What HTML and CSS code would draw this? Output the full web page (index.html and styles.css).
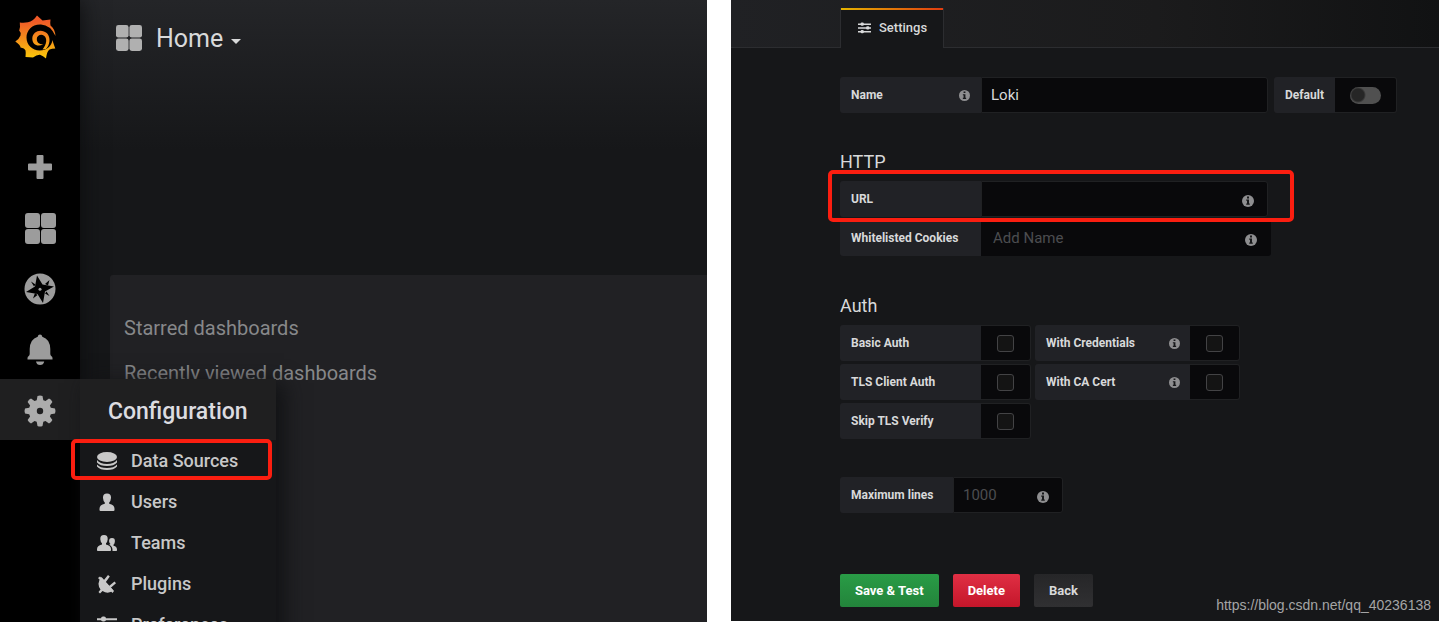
FILE: index.html
```html
<!DOCTYPE html>
<html lang="en">
<head>
    <meta charset="UTF-8">
    <meta name="viewport" content="width=device-width, initial-scale=1.0">
    <title>Grafana - Loki data source</title>
    <link rel="stylesheet" href="styles.css">
</head>
<body>
    <svg class="sprite" aria-hidden="true">
        <symbol id="icon-apps" viewBox="0 0 32 32">
            <rect x="0" y="0" width="15.500" height="15.500" rx="3"/>
            <rect x="16.500" y="0" width="15.500" height="15.500" rx="3"/>
            <rect x="0" y="16.500" width="15.500" height="15.500" rx="3"/>
            <rect x="16.500" y="16.500" width="15.500" height="15.500" rx="3"/>
        </symbol>
        <symbol id="icon-info" viewBox="0 0 12 12">
            <circle cx="6" cy="6" r="6"/>
            <path class="cut" d="M5 1.6h2v1.8H5zM4.2 4.5H7v4h.8v1.3H4.2V8.5H5V5.8h-.8z"/>
        </symbol>
        <symbol id="icon-sliders" viewBox="0 0 20 18">
            <path d="M0 2.2h20v2H0zM0 8h20v2H0zM0 13.8h20v2H0z"/>
            <rect x="4" y="0.6" width="5" height="5" rx="2"/>
            <rect x="12.5" y="6.4" width="5" height="5" rx="2"/>
            <rect x="4" y="12.2" width="5" height="5" rx="2"/>
        </symbol>
    </svg>

    <section class="pane home">
        <nav class="sidemenu">
            <a class="logo" href="#" aria-label="Grafana">
                <svg width="42" height="44" viewBox="0 0 42 44">
                    <defs>
                        <linearGradient id="logo-fill" gradientUnits="userSpaceOnUse" x1="0" y1="6" x2="0" y2="44">
                            <stop offset="0" stop-color="#f05a28"/>
                            <stop offset="1" stop-color="#fbca0a"/>
                        </linearGradient>
                    </defs>
                    <path fill="url(#logo-fill)" d="M22 0.500L27.500 5.500Q31.500 5 35.500 4.500Q35 8 35.500 10.500Q40 14 40.500 21Q35.500 10 26 9.500C17 9 11.500 15.500 11.500 22.500C11.500 30 17.500 35.500 24.500 35.500C32 35.500 36.500 31 37.500 25L38 27Q39 30 40.300 33.500Q37 33.500 34.500 34.500Q32 36 31 43.500Q28 41 25 39.800Q22 39.500 18 42.500Q15 42 10.500 42Q11 38 10.500 35.500Q9.500 33 5.500 32.500Q5.500 30 0.300 26.500Q4.500 23.500 5.500 20.500Q6 17 4.200 15.500Q5.500 12 4.800 7.500Q9 8 13 7.300Q18 6.500 22 0.500Z"/>
                    <path fill="url(#logo-fill)" d="M31 34C35 30 36 22.500 32 18.300C27 13.300 17.500 15.500 17.300 23.500C17.300 29.500 22.500 32.300 28.300 29.300C24.500 29.500 21.800 27.500 21.800 24C21.800 20.500 26 18.700 29 20.700C32.500 23.200 31.800 29 27.500 34.500Z"/>
                </svg>
            </a>
            <ul class="sidemenu-list">
                <li class="sidemenu-item">
                    <a href="#" aria-label="Create">
                        <svg width="24" height="24" viewBox="0 0 24 24"><path d="M9.500 0h5q1 0 1 1v7.500H23q1 0 1 1v5q0 1-1 1h-7.500V23q0 1-1 1h-5q-1 0-1-1v-7.500H1q-1 0-1-1v-5q0-1 1-1h7.500V1q0-1 1-1z"/></svg>
                    </a>
                </li>
                <li class="sidemenu-item">
                    <a href="#" aria-label="Dashboards"><svg width="31" height="31"><use href="#icon-apps"/></svg></a>
                </li>
                <li class="sidemenu-item">
                    <a href="#" aria-label="Explore">
                        <svg width="32" height="32" viewBox="0 0 32 32">
                            <circle cx="16" cy="16" r="15.500"/>
                            <path fill="#000" d="M13 2.500L18.500 11.500L30 13.500L21 18.500L19 30L13.500 21L2 19L11 13.500z"/>
                            <path fill="#000" d="M21 11L25.500 7L24 12.500zM11.500 11.500L7 8.500L10 13.500zM11 20L9 25.500L13.500 22zM21 20.500L25.500 23L22.500 18.500z"/>
                            <circle cx="16" cy="16.300" r="1.500"/>
                        </svg>
                    </a>
                </li>
                <li class="sidemenu-item">
                    <a href="#" aria-label="Alerting">
                        <svg width="26" height="32" viewBox="0 0 26 32"><path d="M13 0.500q2 0 2.300 2.200Q23 5 23.300 15v5q0 1.500 1.200 2.200q1 .6 1 2v1.300H.5v-1.300q0-1.400 1-2q1.200-.7 1.200-2.200v-5Q3 5 10.700 2.700Q11 .5 13 .5zM9 27.500h8.200q-.7 3.500-4.100 3.500T9 27.500z"/></svg>
                    </a>
                </li>
                <li class="sidemenu-item open">
                    <a href="#" aria-label="Configuration">
                        <svg width="32" height="32" viewBox="0 0 32 32"><path fill-rule="evenodd" d="M13.500 1q2.500-1 5 0l.8 4.200 2.200.9L25 3.600q2.300 1 3.400 3.400l-2.500 3.500.9 2.200 4.200.8q1 2.500 0 5l-4.200.8-.9 2.200 2.500 3.500q-1.100 2.400-3.400 3.400l-3.500-2.500-2.200.9-.8 4.200q-2.500 1-5 0l-.8-4.200-2.200-.9L7 28.400Q4.700 27.400 3.600 25l2.500-3.500-.9-2.200L1 18.500q-1-2.500 0-5l4.200-.8.9-2.200L3.600 7Q4.700 4.600 7 3.600l3.500 2.500 2.200-.9zM16 12.800a3.200 3.200 0 1 0 0 6.400a3.200 3.200 0 1 0 0-6.400z"/></svg>
                    </a>
                    <div class="submenu">
                        <h2>Configuration</h2>
                        <ul>
                            <li class="marked">
                                <a href="#">
                                    <svg width="20" height="20" viewBox="0 0 20 20"><ellipse cx="10" cy="6" rx="10" ry="5"/><path d="M0 9q3 4 10 4t10-4v2.500q-3 3.500-10 3.500T0 11.500zM0 13.500q3 3.500 10 3.500t10-3.500v2q-3 3.500-10 3.500T0 15.500z"/></svg>
                                    Data Sources
                                </a>
                            </li>
                            <li>
                                <a href="#">
                                    <svg width="20" height="20" viewBox="0 0 20 20"><path d="M10 1.500q4.300 0 4 4.500-.2 3-1.800 4.500v1.300q5.300 1 5.300 5v1.200q0 1-1 1h-13q-1 0-1-1v-1.200q0-4 5.300-5v-1.300Q6.200 9 6 6q-.3-4.500 4-4.500z"/></svg>
                                    Users
                                </a>
                            </li>
                            <li>
                                <a href="#">
                                    <svg width="20" height="20" viewBox="0 0 20 20"><path d="M7 2q4 0 3.700 4.300-.2 2.700-1.700 4v1.200q5 1 5 4.700v1q0 .8-.8.800H.8q-.8 0-.8-.8v-1q0-3.700 5-4.700v-1.200q-1.500-1.300-1.700-4Q3 2 7 2zM15 5q3.200 0 2.900 3.400-.2 2.200-1.400 3.300v1q3.500.8 3.500 3.700v.9q0 .7-.7.7H15.500q.4-4.500-3.300-6.300l1.300-.6q-1.200-1-1.400-2.700Q11.800 5 15 5z"/></svg>
                                    Teams
                                </a>
                            </li>
                            <li>
                                <a href="#">
                                    <svg width="20" height="20" viewBox="0 0 20 20"><path d="M4.500 3L16.500 16.500Q11 20.500 5.500 17L3 19.500L1.500 18L3.500 15.500Q-1 9 4.500 3z"/><path d="M1 4l2-1.500L17 17l-1.500 2z"/><path d="M6.500 6.500L11 1l1.800 1.500-4.300 6zM12 12L17.500 7.500 19 9.200 13.500 14z"/></svg>
                                    Plugins
                                </a>
                            </li>
                            <li>
                                <a href="#">
                                    <svg width="20" height="18"><use href="#icon-sliders"/></svg>
                                    Preferences
                                </a>
                            </li>
                        </ul>
                    </div>
                </li>
            </ul>
        </nav>
        <main class="dashboard">
            <header class="navbar">
                <svg width="26" height="26"><use href="#icon-apps"/></svg>
                <button type="button">Home <span class="caret"></span></button>
            </header>
            <div class="panel">
                <h3>Starred dashboards</h3>
                <h3>Recently viewed dashboards</h3>
            </div>
        </main>
    </section>

    <section class="pane datasource">
        <div class="tabs">
            <a class="tab" href="#">
                <svg width="13" height="12"><use href="#icon-sliders"/></svg>
                Settings
            </a>
        </div>
        <form class="settings">
            <div class="row name-row">
                <div class="field grow">
                    <label class="label" for="name">Name <svg class="info" width="11" height="11"><use href="#icon-info"/></svg></label>
                    <input class="text" id="name" type="text" value="Loki">
                </div>
                <div class="field">
                    <label class="label short" for="default">Default</label>
                    <span class="cell wide"><input class="switch" id="default" type="checkbox"></span>
                </div>
            </div>

            <h3>HTTP</h3>
            <div class="rows">
                <div class="row http-row marked">
                    <div class="field grow">
                        <label class="label" for="url">URL</label>
                        <input class="text" id="url" type="text">
                        <svg class="info inside" width="12" height="12"><use href="#icon-info"/></svg>
                    </div>
                </div>
                <div class="row cookie-row">
                    <div class="field grow">
                        <label class="label" for="cookies">Whitelisted Cookies</label>
                        <input class="text plain" id="cookies" type="text" placeholder="Add Name">
                        <svg class="info inside" width="12" height="12"><use href="#icon-info"/></svg>
                    </div>
                </div>
            </div>

            <h3>Auth</h3>
            <div class="rows">
                <div class="row">
                    <div class="field">
                        <label class="label" for="basic">Basic Auth</label>
                        <span class="cell"><input class="check" id="basic" type="checkbox"></span>
                    </div>
                    <div class="field">
                        <label class="label long" for="cred">With Credentials <svg class="info" width="11" height="11"><use href="#icon-info"/></svg></label>
                        <span class="cell"><input class="check" id="cred" type="checkbox"></span>
                    </div>
                </div>
                <div class="row">
                    <div class="field">
                        <label class="label" for="tls">TLS Client Auth</label>
                        <span class="cell"><input class="check" id="tls" type="checkbox"></span>
                    </div>
                    <div class="field">
                        <label class="label long" for="ca">With CA Cert <svg class="info" width="11" height="11"><use href="#icon-info"/></svg></label>
                        <span class="cell"><input class="check" id="ca" type="checkbox"></span>
                    </div>
                </div>
                <div class="row">
                    <div class="field">
                        <label class="label" for="skip">Skip TLS Verify</label>
                        <span class="cell"><input class="check" id="skip" type="checkbox"></span>
                    </div>
                </div>
            </div>

            <div class="row lines-row">
                <div class="field">
                    <label class="label medium" for="lines">Maximum lines</label>
                    <input class="text small" id="lines" type="text" placeholder="1000">
                    <svg class="info inside" width="12" height="12"><use href="#icon-info"/></svg>
                </div>
            </div>

            <div class="buttons">
                <button class="btn save" type="button">Save &amp; Test</button>
                <button class="btn delete" type="button">Delete</button>
                <button class="btn back" type="button">Back</button>
            </div>
        </form>
        <p class="watermark">https://blog.csdn.net/qq_40236138</p>
    </section>
</body>
</html>
```
FILE: styles.css
```css
* {
    box-sizing: border-box;
}

body {
    margin: 0;
    padding-right: 1px;
    height: 100vh;
    display: flex;
    gap: 24px;
    background-color: #fff;
    font-family: Roboto, "Liberation Sans", sans-serif;
    color: #d8d9da;
    overflow: hidden;
}

ul {
    list-style: none;
    margin: 0;
    padding: 0;
}

h2,
h3,
p {
    margin: 0;
    font-weight: 400;
}

a {
    color: inherit;
    text-decoration: none;
}

svg {
    flex: none;
    fill: currentColor;
}

input,
button {
    font: inherit;
    color: inherit;
}

.sprite {
    position: absolute;
    width: 0;
    height: 0;
}

.pane {
    flex: 707 1 0;
    min-width: 0;
    background-color: #161719;
}

/* Home */
.home {
    display: flex;
    overflow: hidden;
}

.sidemenu {
    position: relative;
    z-index: 1;
    width: 80px;
    flex: none;
    background-color: #000;
    color: #9c9c9c;
    box-shadow: 0 0 22px #0b0c0d;
}

.logo {
    display: flex;
    justify-content: center;
    height: 135px;
    padding: 15px 8px 0 0;
}

.sidemenu-item > a {
    display: flex;
    align-items: center;
    justify-content: center;
    height: 61px;
    padding-top: 3px;
}

.sidemenu-item.open {
    position: relative;
    background-color: #1f1f20;
    color: #acacac;
}

.submenu {
    position: absolute;
    top: 0;
    left: 80px;
    width: 196px;
    background-color: #161719;
    color: #c8c8c8;
    box-shadow: 8px 4px 20px #111214;
}

.submenu h2 {
    height: 61px;
    padding-left: 28px;
    background-color: #1f1f20;
    color: #dcdce0;
    font-size: 23px;
    font-weight: 500;
    line-height: 65px;
}

.submenu li a {
    display: flex;
    align-items: center;
    gap: 14px;
    height: 41px;
    padding-left: 17px;
    font-size: 18px;
    font-weight: 500;
}

.submenu li {
    position: relative;
}

.marked::after {
    content: "";
    position: absolute;
    z-index: 1;
    border: 4px solid #fb1e10;
    border-radius: 5px;
    pointer-events: none;
}

.submenu .marked::after {
    inset: -1px 4px 1px -9px;
}

.dashboard {
    flex: 1;
    display: flex;
    flex-direction: column;
    min-width: 0;
    padding-left: 30px;
    background: linear-gradient(#242528, #161719 150px);
}

.navbar {
    display: flex;
    align-items: center;
    gap: 14px;
    height: 75px;
    margin-bottom: 200px;
    padding-left: 6px;
    color: #b0b0b0;
}

.navbar button {
    display: flex;
    align-items: center;
    gap: 8px;
    padding: 1px 0 0;
    border: 0;
    background: none;
    color: #d8d9da;
    font-size: 25px;
}

.caret {
    border: 5px solid transparent;
    border-top-color: currentColor;
    border-bottom: 0;
    margin-top: 6px;
}

.panel {
    flex: 1;
    padding: 31px 14px;
    border-radius: 3px 0 0 0;
    background-color: #212124;
    color: #87888a;
}

.panel h3 {
    font-size: 20px;
    line-height: 45px;
}

/* Data source */
.datasource {
    position: relative;
    flex-grow: 708;
    margin-bottom: 1px;
    font-size: 12px;
}

.tabs {
    display: flex;
    height: 48px;
    padding: 8px 0 0 109px;
    border-bottom: 1px solid #2c2d30;
    background: linear-gradient(90deg, #202124, #1b1b1c 60%, #111213);
}

.tab {
    position: relative;
    display: flex;
    align-items: center;
    gap: 8px;
    height: 40px;
    padding: 0 16px 1px 17px;
    border: 1px solid #2c2d30;
    border-width: 0 1px;
    background-color: #161719;
    font-size: 13px;
    font-weight: 500;
}

.tab::before {
    content: "";
    position: absolute;
    inset: 0 0 auto;
    height: 2px;
    background: linear-gradient(90deg, #e5b400, #e03c10);
}

.settings {
    padding: 29px 42px 0 109px;
}

.settings h3 {
    font-size: 18px;
    line-height: 24px;
}

.row {
    display: flex;
    gap: 4px;
    position: relative;
}

.rows {
    display: flex;
    flex-direction: column;
    gap: 3px;
    margin: 7px 0 38px;
}

.name-row {
    gap: 6px;
    margin-bottom: 37px;
}

.http-row {
    margin-right: 129px;
}

.http-row.marked::after {
    inset: -11px -26px -5px -12px;
}

.cookie-row {
    margin-right: 126px;
}

.field {
    position: relative;
    display: flex;
    height: 36px;
}

.grow {
    flex: 1;
}

.label {
    display: flex;
    align-items: center;
    justify-content: space-between;
    width: 141px;
    padding: 0 11px;
    border-radius: 3px 0 0 3px;
    background-color: #212226;
    font-weight: 700;
}

.label.short {
    width: 61px;
}

.label.medium {
    width: 113px;
}

.label.long {
    width: 155px;
    padding-right: 10px;
}

.info {
    color: #8e8e90;
}

.cut {
    fill: #18191b;
}

.info.inside {
    position: absolute;
    right: 14px;
    top: 14px;
}

.text {
    flex: 1;
    min-width: 0;
    padding: 0 9px;
    border: 1px solid #202123;
    border-radius: 0 3px 3px 0;
    background-color: #09090b;
    font-size: 15px;
}

.text::placeholder {
    color: #4c4d50;
}

.text.plain {
    padding-left: 11px;
    border-color: transparent;
}

.text.small {
    flex: none;
    width: 110px;
}

.cell {
    display: flex;
    align-items: center;
    justify-content: center;
    width: 50px;
    border: 1px solid #202123;
    border-left: 0;
    border-radius: 0 3px 3px 0;
    background-color: #09090b;
}

.cell.wide {
    width: 62px;
}

.check,
.switch {
    appearance: none;
    margin: 0;
}

.check {
    width: 17px;
    height: 17px;
    border: 1px solid #434345;
    border-radius: 3px;
    background-color: #141414;
}

.switch {
    width: 31px;
    height: 17px;
    border-radius: 9px;
    background: radial-gradient(circle at 8px 8px, #262626 6px, #505050 8px);
}

.lines-row {
    margin-bottom: 61px;
}

.buttons {
    display: flex;
    gap: 14px;
}

.btn {
    height: 33px;
    padding: 0 15px;
    border: 0;
    border-radius: 2px;
    color: #fff;
    font-size: 13px;
    font-weight: 700;
}

.save {
    background: linear-gradient(#299c46, #23843b);
}

.delete {
    background: linear-gradient(#e02f44, #c4162a);
}

.back {
    background: linear-gradient(#262628, #303032);
    color: #d8d9da;
}

.watermark {
    position: absolute;
    right: 8px;
    bottom: 8px;
    color: #a5a5a6;
    font-family: "Liberation Sans", sans-serif;
    font-size: 14px;
}
```
